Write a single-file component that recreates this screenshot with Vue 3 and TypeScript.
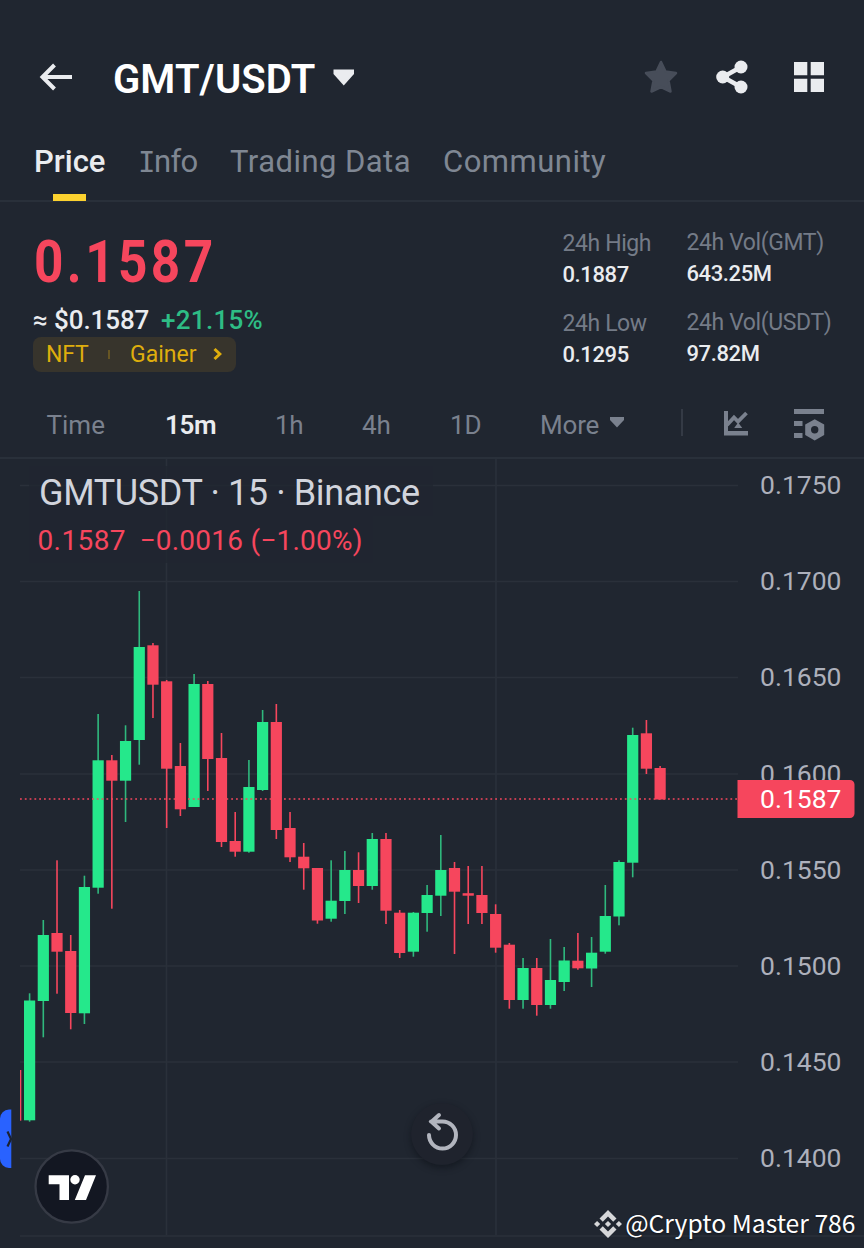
<script setup lang="ts">
interface Tab { label: string; cls: string }
interface Stat { label: string; value: string; cls: string }
interface Interval { label: string; cls: string }
// up flag, body top, body bottom, wick top, wick bottom
type Candle = [number, number, number, number, number]

const tabs: Tab[] = [
  { label: 'Price', cls: 'price active' },
  { label: 'Info', cls: 'info' },
  { label: 'Trading Data', cls: 'trading' },
  { label: 'Community', cls: 'community' },
]

const stats: Stat[] = [
  { label: '24h High', value: '0.1887', cls: 'high' },
  { label: '24h Vol(GMT)', value: '643.25M', cls: 'vol' },
  { label: '24h Low', value: '0.1295', cls: 'low' },
  { label: '24h Vol(USDT)', value: '97.82M', cls: 'vol' },
]

const intervals: Interval[] = [
  { label: 'Time', cls: 'time' },
  { label: '15m', cls: 'm15 active' },
  { label: '1h', cls: 'h1' },
  { label: '4h', cls: 'h4' },
  { label: '1D', cls: 'd1' },
]

const gridRows = [485.5, 581.5, 677.5, 774, 870, 966, 1062, 1158.5]
const axis = gridRows.map((y, i) => ({ y: Math.floor(y) + 9, text: (0.175 - i * 0.005).toFixed(4) }))

const raw: Candle[] = [
  [1, 1000.5, 1120.3, 993.3, 1121.7],
  [1, 935, 1001, 920, 1037.3],
  [0, 933, 951.7, 860.3, 993.7],
  [0, 951, 1013, 935, 1029.3],
  [1, 887, 1013.3, 875.7, 1024],
  [1, 760.3, 887.7, 714, 893.7],
  [0, 760.3, 780.7, 755, 908.7],
  [1, 741, 780.7, 725.3, 822],
  [1, 647, 740, 591, 764.7],
  [0, 645.3, 684.7, 643, 718],
  [0, 681.3, 768.7, 680, 828],
  [0, 766, 809.3, 743, 816],
  [1, 684, 807, 674, 807],
  [0, 684, 759, 681, 791],
  [0, 758, 842, 733, 847],
  [0, 841, 851.7, 812, 856.7],
  [1, 787, 851.7, 760, 852.7],
  [1, 722, 790, 710, 791],
  [0, 722, 830, 704, 839],
  [0, 828, 857.3, 812, 862],
  [0, 856.7, 868.3, 843, 889.7],
  [0, 868, 920.5, 868, 923.7],
  [1, 900.7, 918.7, 860.3, 921.7],
  [1, 870, 901, 851, 914],
  [0, 870, 886, 852.3, 903],
  [1, 839, 886, 833, 889.7],
  [0, 839, 910.7, 833, 924],
  [0, 912.7, 953, 910, 958],
  [1, 912.7, 951.7, 912, 956.7],
  [1, 895, 913, 885, 931.7],
  [1, 870, 895.7, 835, 916],
  [0, 868, 891.7, 862, 954],
  [0, 893.2, 895.7, 866, 924],
  [0, 895, 913, 866, 924],
  [0, 914, 947.7, 904.3, 952.7],
  [0, 944.7, 1000, 943, 1008.7],
  [1, 968, 1000, 958, 1008.7],
  [0, 968, 1005, 958, 1015.7],
  [1, 980, 1005, 939, 1008.7],
  [1, 960.5, 982, 947, 991],
  [0, 960.7, 968.3, 933, 969.7],
  [1, 952.7, 968.5, 937, 987],
  [1, 916, 951.7, 885, 953.7],
  [1, 862, 916.5, 860.3, 925.3],
  [1, 735, 862.7, 727.7, 877.3],
  [0, 733.3, 768.7, 720, 774],
  [0, 768, 799.5, 766, 799.5],
]
const candles = raw.map(([up, top, bottom, high, low], i) => ({
  x: 29.6 + i * 13.707, cls: up ? 'up' : 'down', top, bottom, high, low,
}))
</script>

<template>
  <main class="screen">
    <header class="bar">
      <svg class="back" viewBox="0 0 34 28"><path d="M33 14H4M15.5 2 3.500 14 15.500 26" /></svg>
      <h1>GMT/USDT</h1>
      <svg class="drop" viewBox="0 0 22 17"><path d="M.5.500H21V5L10.750 16.500.500 5Z" /></svg>
      <div class="tools">
        <svg class="star" viewBox="0 0 34 34"><path d="M17 2 21.500 11.500 32 13 24.500 20.500 26.500 31.500 17 27 7.500 31.500 9.500 20.500 2 13 12.500 11.500Z" /></svg>
        <svg class="share" viewBox="0 0 32 34"><path d="M25 7 7 17 25 27" /><circle cx="25" cy="7" r="6.500" /><circle cx="6.700" cy="17" r="6.500" /><circle cx="25" cy="27" r="6.500" /></svg>
        <svg class="apps" viewBox="0 0 30 30"><path d="M0 0H13.300V13.300H0ZM16.700 0H30V13.300H16.700ZM0 16.700H13.300V30H0ZM16.700 16.700H30V30H16.700Z" /></svg>
      </div>
    </header>

    <nav class="tabs">
      <span v-for="t in tabs" :key="t.label" :class="['tab', t.cls]">{{ t.label }}</span>
    </nav>

    <section class="quote">
      <div class="main">
        <div class="last">0.1587</div>
        <div class="sub"><span class="usd">≈ $0.1587</span><span class="pct">+21.15%</span></div>
        <div class="tag">
          <span class="nft">NFT</span><i class="sep"></i><span class="gainer">Gainer</span>
          <svg viewBox="0 0 9 14"><path d="M1.500 2 6.800 7 1.500 12" /></svg>
        </div>
      </div>
      <dl class="stats">
        <div v-for="s in stats" :key="s.label" :class="['stat', s.cls]">
          <dt>{{ s.label }}</dt>
          <dd>{{ s.value }}</dd>
        </div>
      </dl>
    </section>

    <nav class="intervals">
      <span v-for="n in intervals" :key="n.label" :class="['int', n.cls]">{{ n.label }}</span>
      <span class="int more">More</span>
      <svg class="caret" viewBox="0 0 14 11"><path d="M0 0H14V3L7 10.500 0 3Z" /></svg>
      <i class="rule"></i>
      <svg class="draw" viewBox="0 0 24 25">
        <path class="fill" d="M0 0H4V20H24V24.500H0Z" />
        <path class="line" d="M3 14 10 6.500 14 10.500 22.500 2" />
        <path class="fill" d="M14.200 11.500 18.200 17H10.200Z" />
      </svg>
      <svg class="config" viewBox="0 0 30 31">
        <path class="fill" d="M0 0H30V5H0ZM0 12H8.500V17H0ZM0 24H8.500V29H0Z" />
        <path class="fill" fill-rule="evenodd" d="M20.700 10.200 30.200 15.600V26L20.700 31.400 11.200 26V15.600ZM20.700 17.100A3.700 3.700 0 1 0 20.700 24.500 3.700 3.700 0 1 0 20.700 17.100Z" />
      </svg>
    </nav>

    <section class="chart">
      <svg viewBox="0 457 864 791" width="864" height="791">
        <g class="grid">
          <path v-for="y in gridRows" :key="y" :d="`M20 ${y}H738`" />
          <path d="M20 1236H864M166.500 459V1235M496 459V1235" />
        </g>
        <rect class="veil" x="29" y="466" width="404" height="50" />
        <rect class="veil" x="29" y="516" width="344" height="47" />
        <rect class="down" x="20" y="1070" width="1.300" height="50.700" />
        <g v-for="(c, i) in candles" :key="i" :class="c.cls">
          <rect class="wick" :x="c.x - 0.8" :y="c.high" width="1.600" :height="c.low - c.high" />
          <rect :x="c.x - 5.600" :y="c.top" width="11.200" :height="c.bottom - c.top" />
        </g>
        <path class="lastline" d="M20 799H738" />

        <text class="symbol" x="39" y="505" textLength="381">GMTUSDT · 15 · Binance</text>
        <text class="change" x="37.500" y="550" textLength="88">0.1587</text>
        <text class="change" x="139.500" y="550" textLength="223">−0.0016 (−1.00%)</text>

        <text v-for="a in axis" :key="a.text" class="tick" x="760" :y="a.y" textLength="81.500">{{ a.text }}</text>
        <path class="badge" d="M737.500 780H850a4.500 4.500 0 0 1 4.500 4.500V813.500a4.500 4.500 0 0 1 -4.500 4.500H737.500Z" />
        <text class="tick now" x="760" y="808" textLength="81.500">0.1587</text>

        <path class="handle" d="M11.300 1109.500V1168H9A9 9 0 0 1 0 1159V1118.500A9 9 0 0 1 9 1109.500Z" />
        <path class="chev" d="M7.500 1131.500 11 1139 7.500 1146.500" />

        <circle class="tvring" cx="71.700" cy="1186.500" r="36.200" />
        <path class="tv" d="M48.700 1175.300H69V1200H59.500V1184.300H48.700ZM85 1175.300H96L86 1200H74.800Z" />
        <circle class="tv" cx="75" cy="1179.800" r="4.700" />
      </svg>
      <button class="reset" aria-label="Reset chart">
        <svg viewBox="0 0 34 40"><path d="M4 23A13.500 13.500 0 1 0 17.500 9.500H6M14 3 6.500 9.800 14 16.500" /></svg>
      </button>
      <div class="credit">
        <svg viewBox="0 0 28 28"><path d="M14 0 22.500 8.500 19.200 11.800 14 6.600 8.800 11.800 5.500 8.500ZM14 28 5.500 19.500 8.800 16.200 14 21.400 19.200 16.200 22.500 19.500ZM3.100 10.900 6.200 14 3.100 17.100 0 14ZM24.900 10.900 28 14 24.900 17.100 21.800 14ZM14 10.900 17.100 14 14 17.100 10.900 14Z" /></svg>
        <span>@Crypto Master 786</span>
      </div>
    </section>
  </main>
</template>

<style>
body { background: #202630; }
</style>

<style scoped>
.screen { width: 864px; height: 1248px; overflow: hidden; background: #202630; color: #eaecef; font-family: Roboto, "Liberation Sans", sans-serif; white-space: nowrap; }
.screen svg { display: block; flex: none; }

.bar { display: flex; align-items: center; box-sizing: border-box; height: 128px; padding: 26px 40px 0 39px; }
.back { width: 34px; height: 28px; fill: none; stroke: #eaecef; stroke-width: 4; }
h1 { width: 202px; margin: 5px 0 0 40px; font-size: 40px; line-height: 48px; font-weight: 600; letter-spacing: 0.1px; color: #fff; }
.drop { width: 22px; height: 17px; margin-left: 18px; fill: #eaecef; }
.tools { display: flex; align-items: center; margin-left: auto; }
.star { width: 34px; height: 34px; fill: #474d59; stroke: #474d59; stroke-width: 2.500; stroke-linejoin: round; }
.share { width: 32px; height: 34px; margin-left: 38px; fill: #eaecef; }
.share path { fill: none; stroke: #eaecef; stroke-width: 4.500; }
.apps { width: 30px; height: 30px; margin-left: 46px; fill: #eaecef; }

.tabs { display: flex; gap: 33px; box-sizing: border-box; height: 74px; padding: 14px 0 0 34px; border-bottom: 2px solid #29303a; color: #7f8793; font-size: 31px; line-height: 40px; }
.tab { position: relative; height: 58px; }
.tab.active { color: #eaecef; font-weight: 500; }
.tab.active::after { content: ""; position: absolute; left: 19px; bottom: -1px; width: 33px; height: 7px; background: #fcd22f; }
.price { width: 71px; }
.info { width: 59px; letter-spacing: -0.7px; }
.info::first-letter { font-family: "DejaVu Sans Mono", monospace; font-size: 29px; letter-spacing: -1.500px; }
.trading { width: 180px; letter-spacing: 0.45px; }
.community { width: 163px; letter-spacing: 0.5px; }

.quote { display: flex; justify-content: space-between; height: 190px; }
.main { padding-left: 33px; }
.last { width: 210px; height: 68px; margin: 25px 0 0 1px; font-size: 60px; line-height: 69px; font-weight: 700; letter-spacing: 4px; color: #f6465d; transform: scaleX(0.855); transform-origin: 0 0; }
.sub { display: flex; height: 42px; font-size: 26px; line-height: 51px; font-weight: 500; }
.usd { width: 128px; letter-spacing: -0.1px; }
.pct { color: #2ebd85; letter-spacing: 0.3px; }
.tag { display: flex; align-items: center; box-sizing: border-box; width: 203px; height: 35px; padding-left: 13px; border-radius: 8px; background: #37342c; color: #dfae0d; font-size: 23px; line-height: 36px; }
.nft { width: 62px; letter-spacing: -0.2px; }
.sep { width: 2px; height: 9px; background: #675624; }
.gainer { width: 83px; margin-left: 20px; }
.tag svg { width: 9px; height: 14px; margin-top: -1px; fill: none; stroke: #dfae0d; stroke-width: 3; }
.stats { display: grid; grid-template-columns: 124px 177.500px; grid-auto-rows: 80px; margin: 26px 0 0; }
.stat { margin-top: 1px; font-size: 23px; letter-spacing: -0.4px; }
dt { height: 31px; line-height: 29px; color: #747b87; }
dd { margin: 0; font-size: 22px; line-height: 30px; font-weight: 500; }
.stat.vol { margin-top: 0; }

.intervals { display: flex; align-items: center; box-sizing: border-box; height: 65px; padding-left: 46.500px; color: #7a818e; font-size: 26px; }
.int { line-height: 32px; }
.time { width: 118.500px; }
.m15 { width: 110px; color: #eaecef; font-weight: 600; letter-spacing: -0.4px; }
.h1 { width: 87px; letter-spacing: -0.4px; }
.h4 { width: 88px; }
.d1 { width: 90px; }
.more { width: 70px; letter-spacing: -0.2px; }
.caret { width: 14px; height: 11px; margin-top: -5px; fill: #7a818e; }
.rule { width: 2px; height: 27px; margin: -4px 41px 0 57px; background: #343a45; }
.draw { width: 24px; height: 25px; margin-top: -3px; }
.config { width: 30px; height: 31px; margin: -1px 0 0 46px; overflow: visible; }
.fill { fill: #7a818e; }
.line { fill: none; stroke: #7a818e; stroke-width: 3.800; }

.chart { position: relative; height: 791px; }
.chart::before { content: ""; position: absolute; inset: 0 0 auto; height: 2px; background: #29303a; }
.grid { stroke: #2a303a; stroke-width: 1.700; }
.veil { fill: #202630; fill-opacity: 0.75; }
.up { fill: #25e88b; }
.up .wick { fill: #2fb87d; }
.down { fill: #f6465d; }
.lastline { stroke: #f6465d; stroke-width: 1.700; stroke-dasharray: 1.800 3; fill: none; }
.symbol { font-size: 36px; fill: #d1d4dc; }
.change { font-size: 28px; fill: #f6465d; }
.tick { font-size: 26.500px; fill: #adb0bb; }
.now { fill: #fff; }
.badge { fill: #f6465d; }
.handle { fill: #2962ff; }
.chev { fill: none; stroke: #1c2230; stroke-width: 2.200; }
.tvring { fill: #131722; stroke: #363a45; stroke-width: 2.300; }
.tv { fill: #fff; }
.reset { position: absolute; left: 411px; top: 646px; width: 62px; height: 62px; padding: 0; border: 0; border-radius: 50%; background: #1f232d; box-shadow: 0 3px 6px rgba(10, 13, 20, 0.5); }
.reset svg { width: 34px; height: 40px; margin: -4px 0 0 14px; fill: none; stroke: #b2b5be; stroke-width: 4; stroke-linecap: round; }
.credit { position: absolute; right: 8.500px; top: 748px; display: flex; align-items: center; gap: 3px; height: 36px; color: #fff; font-family: "Noto Sans CJK SC", "Noto Sans", sans-serif; font-size: 24.700px; line-height: 36px; text-shadow: 0 1px 2px rgba(0, 0, 0, 0.5); }
.credit span { margin-top: -2px; }
.credit svg { width: 28px; height: 28px; margin-top: 2px; fill: #d6d7d9; }
</style>
